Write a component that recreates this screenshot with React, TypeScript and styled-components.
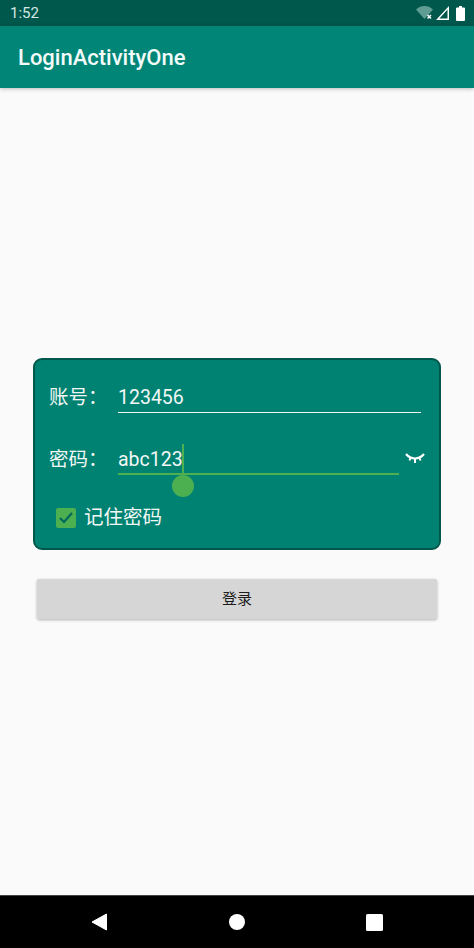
import React from "react";
import styled, { createGlobalStyle } from "styled-components";

const Global = createGlobalStyle`
  html, body { margin: 0; padding: 0; background: #fafafa; }
  body { font-family: Roboto, "Noto Sans CJK SC", sans-serif; }
`;

const Screen = styled.div`
  width: 474px;
  height: 948px;
  display: flex;
  flex-direction: column;
  overflow: hidden;
`;

const StatusBar = styled.div`
  height: 26px;
  background: #00574b;
  display: flex;
  align-items: center;
  justify-content: space-between;
  padding: 0 9px 0 10px;
  color: #d4e8e4;
  font-size: 15px;
`;

const StatusIcons = styled.div`
  display: flex;
  align-items: center;
  gap: 2px;
`;

const AppBar = styled.div`
  height: 62px;
  background: #008577;
  color: #f2fbf9;
  display: flex;
  align-items: center;
  padding-left: 18px;
  font-size: 22px;
  font-weight: 500;
  box-shadow: 0 1px 4px rgba(0, 0, 0, 0.25);
  position: relative;
`;

const Content = styled.div`
  flex: 1;
  background: #fafafa;
  padding: 270px 33px 0;
`;

const Card = styled.div`
  box-sizing: border-box;
  width: 408px;
  height: 192px;
  background: #008272;
  border: 2px solid #00574b;
  border-radius: 9px;
  padding: 0 14px;
  color: #f2f7f5;
`;

const Row = styled.div<{ $top: number }>`
  display: flex;
  align-items: flex-start;
  margin-top: ${(p) => p.$top}px;
`;

const Label = styled.div`
  width: 69px;
  font-size: 19.5px;
  line-height: 30px;
  white-space: nowrap;
`;

const Field = styled.div<{ $color: string; $width: number; $line: number }>`
  position: relative;
  box-sizing: border-box;
  width: ${(p) => p.$width}px;
  height: 30px;
  border-bottom: ${(p) => p.$line}px solid ${(p) => p.$color};
  font-size: 19.5px;
  line-height: 30px;
`;

const Caret = styled.div`
  position: absolute;
  left: 64px;
  top: -1px;
  width: 2px;
  height: 30px;
  background: #4caf50;
`;

const Handle = styled.div`
  position: absolute;
  left: 54px;
  top: 30px;
  width: 22px;
  height: 22px;
  border-radius: 50%;
  background: #4caf50;
`;

const EyeIcon = styled.svg`
  display: block;
  margin: 8px 0 0 6px;
`;

const CheckRow = styled.div`
  display: flex;
  align-items: center;
  margin: 30px 0 0 7px;
`;

const Check = styled.div`
  width: 20px;
  height: 20px;
  border-radius: 2px;
  background: #4caf50;
  display: flex;
  align-items: center;
  justify-content: center;
`;

const CheckLabel = styled.div`
  margin-left: 8px;
  font-size: 19.5px;
  line-height: 26px;
`;

const LoginButton = styled.button`
  display: block;
  width: 400px;
  height: 40px;
  margin: 29px 0 0 4px;
  padding: 0 0 4px;
  border: none;
  border-radius: 2px;
  background: #d6d6d6;
  color: #1c1c1c;
  font-family: Roboto, "Noto Sans CJK SC", sans-serif;
  font-size: 15px;
  box-shadow: 0 1px 3px rgba(0, 0, 0, 0.3);
`;

const NavBar = styled.div`
  height: 53px;
  background: #000;
  border-top: 1px solid #444;
  box-sizing: border-box;
  display: flex;
  align-items: center;
`;

const NavSlot = styled.div<{ $left: number }>`
  margin-left: ${(p) => p.$left}px;
  display: flex;
`;

export default function App() {
  return (
    <Screen>
      <Global />
      <StatusBar>
        <span>1:52</span>
        <StatusIcons>
          <svg width="18" height="14" viewBox="0 0 18 14">
            <path d="M0 3.500C2.500 1 5.500 0 8.500 0s6 1 8.500 3.500L8.500 13z" fill="#5f9c93" />
            <path d="M11.500 9l3.500 3.500m0-3.500l-3.500 3.500" stroke="#fff" strokeWidth="1.500" />
          </svg>
          <svg width="13" height="14" viewBox="0 0 13 14">
            <path d="M13 0v14H0zM11.500 3.500L3.400 12.500h8.100z" fill="#fff" fillRule="evenodd" />
          </svg>
          <svg width="9" height="15" viewBox="0 0 9 15" style={{ marginLeft: 5 }}>
            <path d="M3 0h3v1.500h2a1 1 0 0 1 1 1V14a1 1 0 0 1-1 1H1a1 1 0 0 1-1-1V2.500a1 1 0 0 1 1-1h2z" fill="#fff" />
          </svg>
        </StatusIcons>
      </StatusBar>
      <AppBar>LoginActivityOne</AppBar>
      <Content>
        <Card>
          <Row $top={23}>
            <Label>账号：</Label>
            <Field $color="#f2f7f5" $width={303} $line={1.5}>123456</Field>
          </Row>
          <Row $top={32}>
            <Label>密码：</Label>
            <Field $color="#4caf50" $width={281} $line={2}>
              abc123
              <Caret />
              <Handle />
            </Field>
            <EyeIcon width="20" height="10" viewBox="0 0 20 10">
              <path d="M1 1c2.500 3 5.500 4.500 9 4.500S16.500 4 19 1" fill="none" stroke="#fff" strokeWidth="2.200" />
              <path d="M5.500 5L4.500 7.500M10 6v4M14.500 5l1 2.500" stroke="#fff" strokeWidth="2" />
            </EyeIcon>
          </Row>
          <CheckRow>
            <Check>
              <svg width="16" height="14" viewBox="0 0 16 14">
                <path d="M2 7l4 4 8-9" fill="none" stroke="#00695c" strokeWidth="2.200" />
              </svg>
            </Check>
            <CheckLabel>记住密码</CheckLabel>
          </CheckRow>
        </Card>
        <LoginButton>登录</LoginButton>
      </Content>
      <NavBar>
        <NavSlot $left={91}>
          <svg width="16" height="18" viewBox="0 0 16 18">
            <path d="M15.500 1v16L1 9z" fill="#fff" stroke="#fff" strokeLinejoin="round" />
          </svg>
        </NavSlot>
        <NavSlot $left={122}>
          <svg width="16" height="16" viewBox="0 0 16 16">
            <circle cx="8" cy="8" r="8" fill="#fff" />
          </svg>
        </NavSlot>
        <NavSlot $left={121}>
          <svg width="17" height="17" viewBox="0 0 17 17">
            <rect width="17" height="17" rx="1.500" fill="#fff" />
          </svg>
        </NavSlot>
      </NavBar>
    </Screen>
  );
}
